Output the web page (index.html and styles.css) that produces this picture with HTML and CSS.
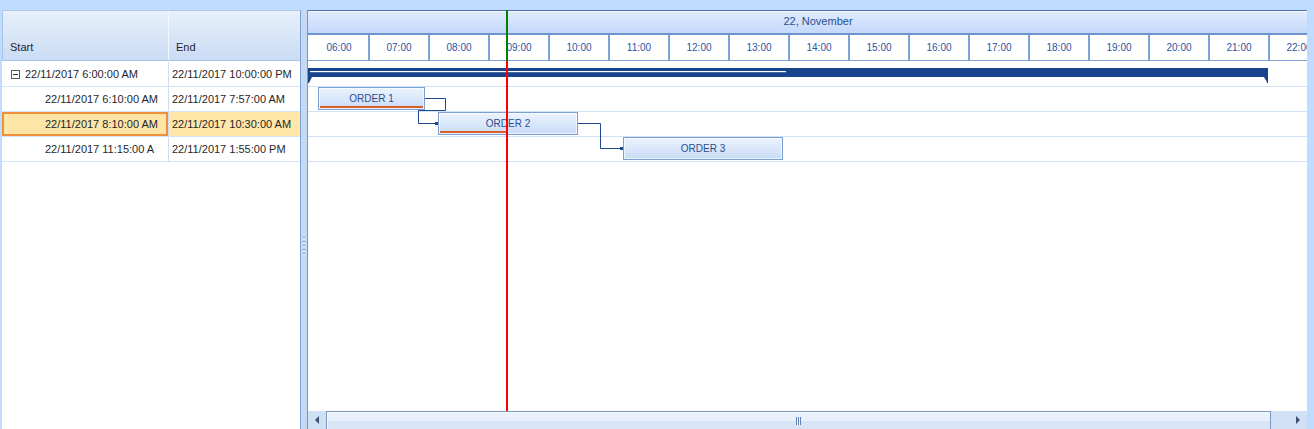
FILE: index.html
```html
<!DOCTYPE html>
<html>
<head>
<meta charset="utf-8">
<link rel="stylesheet" href="styles.css">
</head>
<body>
<div class="app">
  <div class="grid">
    <div class="grid-head">
      <div class="hcell c-start">Start</div>
      <div class="hcell c-end">End</div>
    </div>
    <div class="grid-body">
      <div class="grow">
        <div class="cell c-start lvl0"><span class="expander"></span>22/11/2017 6:00:00 AM</div>
        <div class="cell c-end">22/11/2017 10:00:00 PM</div>
      </div>
      <div class="grow">
        <div class="cell c-start lvl1">22/11/2017 6:10:00 AM</div>
        <div class="cell c-end">22/11/2017 7:57:00 AM</div>
      </div>
      <div class="grow sel">
        <div class="cell c-start lvl1">22/11/2017 8:10:00 AM</div>
        <div class="cell c-end">22/11/2017 10:30:00 AM</div>
      </div>
      <div class="grow">
        <div class="cell c-start lvl1">22/11/2017 11:15:00 A</div>
        <div class="cell c-end">22/11/2017 1:55:00 PM</div>
      </div>
    </div>
  </div>
  <div class="splitter"><div class="sgrip"></div></div>
  <div class="gantt">
    <div class="g-head">
      <div class="g-date">22, November</div>
      <div class="g-times">
        <div class="tcell">06:00</div>
        <div class="tcell">07:00</div>
        <div class="tcell">08:00</div>
        <div class="tcell">09:00</div>
        <div class="tcell">10:00</div>
        <div class="tcell">11:00</div>
        <div class="tcell">12:00</div>
        <div class="tcell">13:00</div>
        <div class="tcell">14:00</div>
        <div class="tcell">15:00</div>
        <div class="tcell">16:00</div>
        <div class="tcell">17:00</div>
        <div class="tcell">18:00</div>
        <div class="tcell">19:00</div>
        <div class="tcell">20:00</div>
        <div class="tcell">21:00</div>
        <div class="tcell">22:00</div>
      </div>
    </div>
    <div class="g-body">
      <div class="g-row">
        <svg class="summary" width="960" height="24" viewBox="0 0 960 24">
          <rect x="0" y="6" width="960" height="9" fill="#17448c"/>
          <rect x="2" y="9" width="476" height="1.2" fill="#ffffff"/>
          <polygon points="0,15 4,15 3,17 2,19 1,21 0,21" fill="#17448c"/>
          <polygon points="956,15 960,15 960,21 959,21 958,18 957,17" fill="#17448c"/>
        </svg>
      </div>
      <div class="g-row">
        <div class="task" style="left:10px;width:107px">ORDER 1<i class="prog" style="width:103px"></i></div>
      </div>
      <div class="g-row">
        <div class="task" style="left:130px;width:140px">ORDER 2<i class="prog" style="width:68px"></i></div>
      </div>
      <div class="g-row">
        <div class="task" style="left:315px;width:160px">ORDER 3</div>
      </div>
      <svg class="links" width="999" height="120" viewBox="0 0 999 120">
        <path d="M117 37.5 H137.5 V49.5 H110.5 V62.5 H128" fill="none" stroke="#1d478e" stroke-width="1"/>
        <rect x="127" y="61" width="3" height="3" fill="#1d478e"/>
        <path d="M270 62.5 H292.5 V87.5 H313" fill="none" stroke="#1d478e" stroke-width="1"/>
        <rect x="312" y="86" width="3" height="3" fill="#1d478e"/>
      </svg>
    </div>
    <div class="hscroll">
      <div class="sbtn"><span class="arr-l"></span></div>
      <div class="thumb"><span class="tgrip"></span></div>
      <div class="track"></div>
      <div class="sbtn"><span class="arr-r"></span></div>
    </div>
    <div class="now-top"></div>
    <div class="now"></div>
  </div>
</div>
</body>
</html>
```
FILE: styles.css
```css
html, body {
  margin: 0;
  padding: 0;
}
body {
  background: #bfdbfe;
  width: 1314px;
  height: 429px;
  overflow: hidden;
  font-family: "Liberation Sans", Arial, sans-serif;
}
.app {
  display: flex;
  padding: 10px 0 0 2px;
  height: 419px;
}
.grid {
  width: 298px;
  flex-shrink: 0;
  background: #ffffff;
  display: flex;
  flex-direction: column;
}
.grid-head {
  display: flex;
  height: 51px;
  box-sizing: border-box;
  border-top: 1px solid #b3cbeb;
  border-bottom: 1px solid #a6c3ea;
  background: linear-gradient(#e7f0fb, #cadcf4);
}
.hcell {
  display: flex;
  align-items: flex-end;
  box-sizing: border-box;
  padding-bottom: 6px;
  font-size: 11px;
  line-height: 13px;
  color: #1e2433;
}
.hcell.c-start {
  width: 167px;
  padding-left: 8px;
  border-right: 1px solid #f3f7fd;
  box-shadow: inset 1px 0 0 #a9c4e8;
}
.hcell.c-end {
  width: 131px;
  padding-left: 7px;
}
.grid-body {
  padding-top: 1px;
  flex: 1;
}
.grow {
  display: flex;
  height: 25px;
  box-sizing: border-box;
  border-bottom: 1px solid #d5e3f4;
  font-size: 11px;
  color: #1f1f2a;
}
.cell {
  display: flex;
  align-items: center;
  white-space: nowrap;
  overflow: hidden;
  box-sizing: border-box;
}
.cell.c-start {
  width: 167px;
  border-right: 1px solid #d0def2;
}
.cell.c-end {
  width: 131px;
  padding-left: 3px;
}
.lvl0 {
  padding-left: 9px;
}
.lvl1 {
  padding-left: 43px;
}
.expander {
  width: 9px;
  height: 9px;
  box-sizing: border-box;
  border: 1px solid #5a5a5a;
  margin-right: 5px;
  position: relative;
  flex-shrink: 0;
}
.expander::after {
  content: "";
  position: absolute;
  left: 1px;
  right: 1px;
  top: 3px;
  height: 1px;
  background: #333333;
}
.grow.sel .c-start {
  background: #fde5a6;
  box-shadow: inset 0 0 0 2px #f1903c;
}
.grow.sel .c-end {
  background: #fee7a9;
}
.splitter {
  width: 7px;
  flex-shrink: 0;
  box-sizing: border-box;
  border-left: 1px solid #7ea2d8;
  background: #c6d9f3;
  display: flex;
  justify-content: center;
}
.sgrip {
  width: 2px;
  height: 18px;
  margin-top: 227px;
  background: repeating-linear-gradient(to bottom, #6a8fcb 0 1px, #ffffff 1px 2px, transparent 2px 4px);
}
.gantt {
  width: 1000px;
  flex-shrink: 0;
  box-sizing: border-box;
  border-left: 1px solid #6f95cd;
  background: #ffffff;
  display: flex;
  flex-direction: column;
  position: relative;
  overflow: hidden;
}
.g-head {
  height: 51px;
  display: flex;
  flex-direction: column;
  flex-shrink: 0;
}
.g-date {
  height: 25px;
  box-sizing: border-box;
  border-top: 1px solid #4a6fab;
  border-bottom: 2px solid #6d94cd;
  background: linear-gradient(#e2ecfd, #c3d8fb);
  box-shadow: inset 0 1px 0 #f6f9ff;
  font-size: 11px;
  color: #2b4f8f;
  text-align: center;
  line-height: 21px;
  padding-left: 21px;
}
.g-times {
  height: 26px;
  box-sizing: border-box;
  border-bottom: 1px solid #7aa2d6;
  padding-left: 2px;
  display: flex;
  overflow: hidden;
}
.tcell {
  flex: 0 0 60px;
  box-sizing: border-box;
  border-right: 2px solid #7aa2d6;
  text-align: center;
  font-size: 10px;
  line-height: 25px;
  color: #2856a5;
}
.g-body {
  flex: 1;
  position: relative;
  padding-top: 1px;
}
.g-row {
  height: 25px;
  box-sizing: border-box;
  border-bottom: 1px solid #d3e1f4;
  position: relative;
}
.summary {
  display: block;
}
.task {
  position: absolute;
  top: 0;
  height: 23px;
  box-sizing: border-box;
  border: 1px solid #7c9fd2;
  background: linear-gradient(#ecf3fe, #c8dcf7);
  box-shadow: inset 0 0 0 1px rgba(255, 255, 255, 0.65);
  font-size: 10px;
  line-height: 21px;
  color: #2d4d8c;
  text-align: center;
  white-space: nowrap;
}
.prog {
  position: absolute;
  left: 1px;
  bottom: 1px;
  height: 2px;
  background: #d95f2d;
}
.links {
  position: absolute;
  left: 0;
  top: 0;
  overflow: visible;
  pointer-events: none;
}
.hscroll {
  height: 18px;
  flex-shrink: 0;
  display: flex;
  background: #d1e1f5;
}
.sbtn {
  width: 18px;
  flex-shrink: 0;
  display: flex;
  align-items: center;
  justify-content: center;
}
.arr-l {
  width: 0;
  height: 0;
  border-top: 4px solid transparent;
  border-bottom: 4px solid transparent;
  border-right: 4px solid #3f516f;
}
.arr-r {
  width: 0;
  height: 0;
  border-top: 4px solid transparent;
  border-bottom: 4px solid transparent;
  border-left: 4px solid #3f516f;
}
.thumb {
  width: 945px;
  flex-shrink: 0;
  box-sizing: border-box;
  border: 1px solid #7e97bc;
  border-bottom: none;
  background: linear-gradient(#e9f1fc 0 50%, #d7e5f7 50%);
  box-shadow: inset 1px 1px 0 #f6f9fe;
  display: flex;
  align-items: center;
  justify-content: center;
}
.tgrip {
  width: 5px;
  height: 8px;
  background: linear-gradient(90deg, #5f80b6 0 1px, #f4f8fd 1px 2px, #5f80b6 2px 3px, #f4f8fd 3px 4px, #5f80b6 4px 5px);
}
.track {
  width: 18px;
  flex-shrink: 0;
}
.now-top {
  position: absolute;
  left: 198px;
  top: 0;
  width: 2px;
  height: 51px;
  background: #008000;
}
.now {
  position: absolute;
  left: 198px;
  top: 51px;
  bottom: 18px;
  width: 2px;
  background: #ff0000;
}
```
